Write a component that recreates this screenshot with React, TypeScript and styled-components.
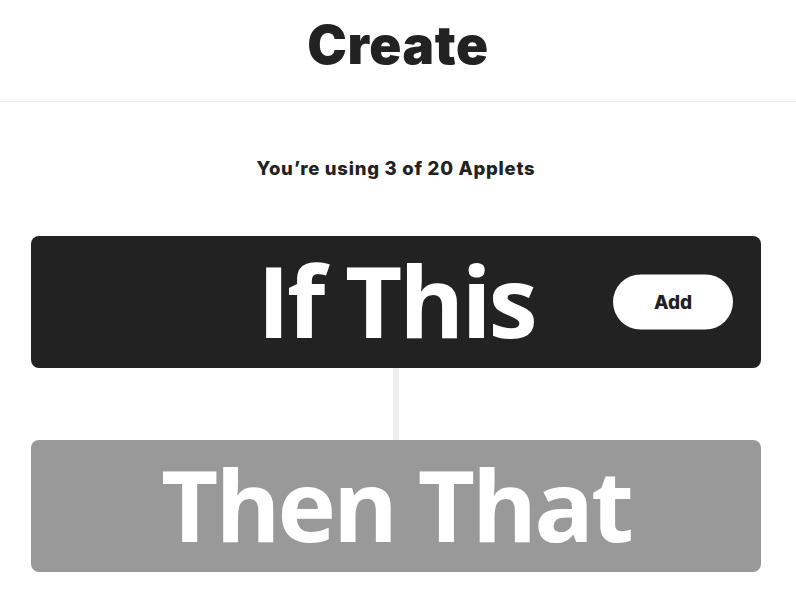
import React from "react";
import styled, { createGlobalStyle } from "styled-components";

const Global = createGlobalStyle`
  html, body { margin: 0; padding: 0; background: #fff; }
  body { font-family: "Inter", "Lato", sans-serif; color: #222; }
`;

const Page = styled.div`
  display: flex;
  flex-direction: column;
`;

const Header = styled.header`
  height: 102px;
  border-bottom: 1px solid #eeeeee;
  display: flex;
  justify-content: center;
  align-items: flex-start;
  padding-top: 12px;
  box-sizing: border-box;
`;

const Title = styled.h1`
  margin: 0;
  font-family: "Inter", sans-serif;
  font-weight: 900;
  font-size: 53px;
  line-height: 66px;
  letter-spacing: 0.6px;
  color: #222;
`;

const Main = styled.main`
  display: flex;
  flex-direction: column;
  align-items: center;
  padding: 0 35px 0 31px;
`;

const Usage = styled.p`
  margin: 54px 0 0;
  font-family: "Inter", sans-serif;
  font-weight: 800;
  font-size: 18.5px;
  line-height: 24px;
  letter-spacing: 0.75px;
  color: #222;
`;

const Card = styled.div<{ $bg: string }>`
  position: relative;
  align-self: stretch;
  height: 132px;
  box-sizing: border-box;
  padding-bottom: 5px;
  border-radius: 8px;
  background: ${(p) => p.$bg};
  display: flex;
  align-items: center;
  justify-content: center;
`;

const FirstCard = styled(Card)`
  margin-top: 56px;
`;

const CardText = styled.span`
  font-family: "Open Sans", sans-serif;
  font-weight: 700;
  font-size: 99px;
  line-height: 1;
  color: #fff;
  letter-spacing: -3px;
`;

const AddButton = styled.button`
  position: absolute;
  right: 28px;
  top: 50%;
  transform: translateY(-50%);
  width: 120px;
  height: 55px;
  border: none;
  border-radius: 28px;
  background: #fff;
  color: #222;
  font-family: "Inter", sans-serif;
  font-weight: 800;
  font-size: 19px;
  cursor: pointer;
`;

const Connector = styled.div`
  width: 6px;
  height: 72px;
  background: #eeeeee;
`;

export default function App() {
  return (
    <>
      <Global />
      <Page>
        <Header>
          <Title>Create</Title>
        </Header>
        <Main>
          <Usage>You’re using 3 of 20 Applets</Usage>
          <FirstCard $bg="#222222">
            <CardText>If This</CardText>
            <AddButton>Add</AddButton>
          </FirstCard>
          <Connector />
          <Card $bg="#999999">
            <CardText>Then That</CardText>
          </Card>
        </Main>
      </Page>
    </>
  );
}
